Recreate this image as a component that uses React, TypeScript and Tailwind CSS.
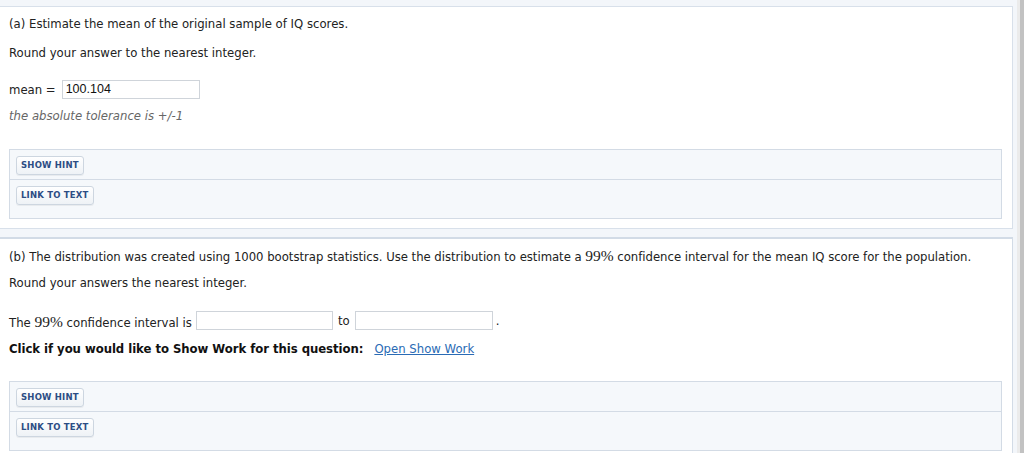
import React from "react"

const verdana = "font-['DejaVu_Sans',Verdana,sans-serif]"

function HintButton({ label }: { label: string }) {
  return (
    <button className="h-[19px] px-[4px] rounded-[3px] border border-[#cdd6e0] bg-gradient-to-b from-white to-[#eef2f6] text-[8.5px] font-bold tracking-[0.2px] text-[#2c4d84] leading-none shadow-[0_1px_0_rgba(0,0,0,0.05)]">
      {label}
    </button>
  )
}

function HintBox() {
  return (
    <div className="ml-[9px] mr-[10px] border border-[#d3dbe5] bg-[#f5f8fb]">
      <div className="h-[30px] pt-[6px] pl-[6px] border-b border-[#d3dbe5]">
        <HintButton label="SHOW HINT" />
      </div>
      <div className="h-[38px] pt-[6px] pl-[6px]">
        <HintButton label="LINK TO TEXT" />
      </div>
    </div>
  )
}

function Pct() {
  return <span className="font-['Liberation_Serif',serif] text-[15.5px]">99%</span>
}

function Field({ value, width }: { value?: string; width: string }) {
  return (
    <div className={`${width} h-[19px] border border-[#cfd4da] bg-white pl-[3px] flex items-center font-['Liberation_Sans',Arial,sans-serif] text-[12.5px] text-[#111]`}>
      {value}
    </div>
  )
}

export default function App() {
  return (
    <div className={`${verdana} w-[1024px] h-[453px] overflow-hidden bg-[#f3f6fa] flex text-[11.7px] text-[#222]`}>
      <div className="w-[1013px] pt-[6px] flex flex-col">
        <section className="bg-white border-t border-r border-b border-[#d8e0ea] pb-[9px]">
          <div className="h-[32px] pt-[10px] pl-[9px] leading-[14px]">
            (a) Estimate the mean of the original sample of IQ scores.
          </div>
          <div className="h-[37px] pt-[7px] pl-[9px] leading-[14px]">
            Round your answer to the nearest integer.
          </div>
          <div className="h-[26px] pt-[4px] pl-[9px] flex items-start gap-[6px]">
            <span className="leading-[19px] mt-[1px]">mean =</span>
            <Field value="100.104" width="w-[138px]" />
          </div>
          <div className="h-[47px] pt-[7px] pl-[9px] italic text-[#666] leading-[14px]">
            the absolute tolerance is +/-1
          </div>
          <HintBox />
        </section>

        <section className="mt-[8px] flex-1 bg-white border-t-2 border-r border-[#d2dbe6]">
          <div className="h-[28px] pt-[9px] pl-[9px] leading-[16px] tracking-[-0.03px]">
            (b) The distribution was created using 1000 bootstrap statistics. Use the distribution to estimate a <Pct /> confidence interval for the mean IQ score for the population.
          </div>
          <div className="h-[40px] pt-[9px] pl-[9px] leading-[14px]">
            Round your answers the nearest integer.
          </div>
          <div className="h-[32px] pt-[4px] pl-[9px] flex items-start">
            <span className="leading-[19px] mt-[1px]">The <Pct /> confidence interval is</span>
            <div className="ml-[4px]">
              <Field width="w-[137px]" />
            </div>
            <span className="ml-[5px] mr-[5px] leading-[19px] mt-[1px]">to</span>
            <Field width="w-[138px]" />
            <span className="ml-[3px] leading-[19px] mt-[1px]">.</span>
          </div>
          <div className="h-[42px] pt-[2px] pl-[9px] leading-[16px]">
            <span className="font-bold text-[#111] tracking-[-0.05px]">Click if you would like to Show Work for this question:</span>
            <a href="#" className="ml-[11px] text-[#2a6bb5] underline">Open Show Work</a>
          </div>
          <HintBox />
        </section>
      </div>
      <div className="flex-1" />
      <div className="w-[3px] bg-[#ebebeb]" />
      <div className="w-[4px] bg-[#c2c2c2]" />
    </div>
  )
}
